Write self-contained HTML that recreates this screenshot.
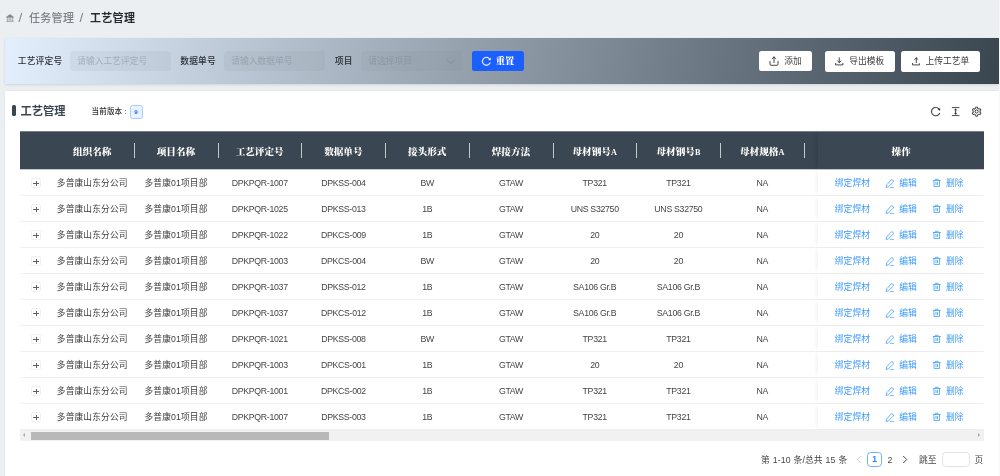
<!DOCTYPE html>
<html lang="zh-CN"><head><meta charset="utf-8"><title>工艺管理</title>
<style>
*{box-sizing:border-box;margin:0;padding:0}
html,body{width:1000px;height:476px;overflow:hidden}
body{background:#eceff2;font-family:"Liberation Sans","Noto Sans CJK SC",sans-serif;color:#333;position:relative;font-size:8.75px}
#root{position:absolute;left:0;top:0;width:1000px;height:476px;overflow:hidden;will-change:opacity;opacity:0.9999}
.abs{position:absolute}
i{font-style:normal}
.bc{position:absolute;left:5px;top:9px;height:18px;line-height:18px;font-size:11px;color:#7d8187;font-weight:500;white-space:nowrap;letter-spacing:0.3px}
.bc b{color:#26292e;font-weight:700}
.search{position:absolute;left:4.800px;top:38px;width:994px;height:46px;background:linear-gradient(100deg,#e3effd 0%,#39454f 100%);box-shadow:0 0.500px 2.500px rgba(60,70,90,.16)}
.lbl{position:absolute;top:0;height:46px;line-height:47.500px;font-size:8.750px;font-weight:500;color:#2b3036;white-space:nowrap;letter-spacing:0.15px}
.inp{position:absolute;top:13px;height:20px;border-radius:4px;background:rgba(125,135,150,.1);color:rgba(125,135,150,.5);font-size:8.750px;line-height:21px;padding-left:7.500px;white-space:nowrap}
.btn{position:absolute;border-radius:2.500px;background:#fff;color:#3a3a3a;font-size:8.750px;white-space:nowrap}
.btn span{position:absolute;top:0}
.btn svg{position:absolute;fill:none;stroke:#333;stroke-width:0.900;stroke-linecap:round;stroke-linejoin:round}
.btn.primary{background:#1b5fff;color:#fff;font-weight:900;font-family:"Liberation Serif","Noto Serif CJK SC",serif}
.card{position:absolute;left:4.800px;top:91px;width:994px;height:386px;background:#fff;box-shadow:0 0 3px rgba(60,70,90,.08)}
.title{position:absolute;left:20.500px;top:100.500px;font-size:11.250px;line-height:20px;font-weight:700;color:#3a4651;white-space:nowrap}
.tbar{position:absolute;left:12.400px;top:105px;width:3.200px;height:11px;border-radius:1.600px;background:#3a4651}
.ver{position:absolute;left:91.500px;top:105.500px;font-size:7.500px;line-height:12px;font-weight:500;color:#333;white-space:nowrap;letter-spacing:0.2px}
.badge{position:absolute;left:129.500px;top:105px;width:13.200px;height:13.600px;border:1px solid #a3d0ff;background:#e8f3ff;border-radius:2.500px;color:#1f62ff;font-size:6.200px;line-height:11.500px;text-align:center;font-weight:700}
.thead{position:absolute;left:20.3px;top:131px;width:963.7px;height:39px;background:linear-gradient(to bottom,#757e85 0,#757e85 1px,#3a4651 1px,#3a4651 38px,#c4c8cb 38px)}
.hc{color:#fff;font-family:"Liberation Serif","Noto Serif CJK SC",serif;font-weight:900;font-size:9.650px;line-height:41.400px;height:38px}
.hc small{font-size:8.200px}
.sep{position:absolute;top:12.300px;width:1px;height:14.600px;background:#c4c9ce}
.tr{position:absolute;left:20.3px;width:963.7px;height:26px;border-bottom:1px solid #f0f0f0}
.c{position:absolute;top:0;text-align:center;white-space:nowrap}
.tr .c{height:26px;line-height:27px;font-size:8.750px;color:#404040}
.tr .en{letter-spacing:-0.3px;color:#454545}
.tr .cn{letter-spacing:0.1px}
.exp{position:absolute;left:10.400px;top:8.400px;width:10px;height:10px;border:0.500px solid #f0f0f0;border-radius:2px;background:#fff}
.exp i{position:absolute;background:#606060}
.exp i:first-child{left:1.700px;top:4.100px;width:5.600px;height:0.800px}
.exp i:last-child{left:4.100px;top:1.700px;width:0.800px;height:5.600px}
.op{position:absolute;left:798.0px;top:0;width:165.70000000000005px;height:25px;background:#fff;box-shadow:-3px 0 4px -2px rgba(0,0,0,.07)}
.thead .op{background:linear-gradient(to bottom,#757e85 0,#757e85 1px,#3b4752 1px,#3b4752 38px,#c4c8cb 38px);height:39px;text-align:center;box-shadow:-3px 0 4px -2px rgba(0,0,0,.15)}
.lk{fill:none;stroke:#409eff;stroke-width:0.850;stroke-linecap:round;stroke-linejoin:round}
.op a{position:absolute;top:0;line-height:27px;color:#3d9bff;font-size:8.750px;white-space:nowrap}
.sb{position:absolute;left:20.3px;top:430px;width:963.7px;height:11px;background:#f1f1f1}
.sb b{position:absolute;left:10.700px;top:2.200px;width:298.500px;height:7.600px;background:#b8b8b8}
.sb i{position:absolute;top:2.900px;width:0;height:0;border:2.600px solid transparent}
.pg{position:absolute;top:450.500px;height:18px;line-height:18px;font-size:8.750px;color:#454545;white-space:nowrap}
</style></head><body><div id="root">
<div class="bc"><svg class="abs" style="left:-0.5px;top:4px;width:10px;height:10px;fill:#85898f" viewBox="0 0 1024 1024"><path d="M894 462c30.900 0 43.800-39.700 18.700-58L530.800 126.200a31.810 31.810 0 0 0-37.600 0L111.300 404c-25.100 18.200-12.200 58 18.800 58H192v374h-72c-4.400 0-8 3.600-8 8v52c0 4.400 3.600 8 8 8h784c4.400 0 8-3.600 8-8v-52c0-4.400-3.600-8-8-8h-72V462h62zM381 836H264V462h117v374zm189 0H453V462h117v374zm190 0H642V462h118v374z"/></svg><span class="abs" style="left:13.600px;font-size:13.500px;font-weight:400">/</span><span class="abs" style="left:24px">任务管理</span><span class="abs" style="left:74.400px;font-size:13.500px;font-weight:400">/</span><b class="abs" style="left:85px">工艺管理</b></div>
<div class="search">
<span class="lbl" style="left:13px">工艺评定号</span><span class="inp" style="left:65px;width:101px">请输入工艺评定号</span>
<span class="lbl" style="left:175.500px">数据单号</span><span class="inp" style="left:219px;width:101px">请输入数据单号</span>
<span class="lbl" style="left:330px">项目</span><span class="inp" style="left:356px;width:101px">请选择项目<svg style="position:absolute;right:6px;top:5.500px;width:9.500px;height:9.500px" viewBox="0 0 10 10"><path d="M1 3L5 7l4-4" fill="none" stroke="rgba(115,125,140,.6)" stroke-width="0.900"/></svg></span>
<span class="btn primary" style="left:467.200px;top:13px;width:52px;height:20px;line-height:20.600px;font-size:9.200px"><svg style="left:9.200px;top:4.800px;width:10.600px;height:10.600px;stroke:#fff;stroke-width:30;fill:#fff" viewBox="0 0 1024 1024"><path d="M909.100 209.300l-56.400 44.100C775.800 155.100 656.200 92 521.900 92 290 92 102.300 279.500 102 511.500 101.700 743.700 289.800 932 521.900 932c181.300 0 335.800-115 394.600-276.100 1.500-4.200-.7-8.900-4.900-10.300l-56.700-19.500a8 8 0 0 0-10.100 4.800c-1.800 5-3.800 10-5.900 14.900-17.300 41-42.100 77.800-73.700 109.400A344.770 344.770 0 0 1 655.900 829c-42.300 17.900-87.400 27-133.800 27-46.500 0-91.500-9.100-133.800-27A341.500 341.500 0 0 1 279 755.200a342.160 342.160 0 0 1-73.700-109.400c-17.900-42.400-27-87.400-27-133.900s9.100-91.500 27-133.900c17.300-41 42.100-77.800 73.700-109.400 31.600-31.600 68.400-56.400 109.300-73.800 42.300-17.900 87.400-27 133.800-27 46.500 0 91.500 9.100 133.800 27a341.500 341.500 0 0 1 109.300 73.800c9.900 9.900 19.200 20.400 27.800 31.400l-60.200 47a8 8 0 0 0 3 14.100l175.600 43c5 1.200 9.900-2.600 9.900-7.700l.8-180.900c-.1-6.600-7.800-10.300-13-6.200z"/></svg><span style="left:23.800px">重置</span></span>
<span class="btn" style="left:754.250px;top:12.750px;width:53.250px;height:20.200px;line-height:20.200px"><svg style="left:9.800px;top:5.200px;width:10px;height:10px" viewBox="0 0 10 10"><path d="M1 5.300v3a1 1 0 0 0 1 1h6a1 1 0 0 0 1-1v-3M5 6.600V0.900M3.200 2.700L5 0.900 6.800 2.700"/></svg><span style="left:25.300px">添加</span></span>
<span class="btn" style="left:820px;top:13.300px;width:70px;height:20.500px;line-height:20.500px"><svg style="left:10.500px;top:5.800px;width:8.500px;height:8.500px" viewBox="0 0 8.500 8.500"><path d="M4.250 0.800V5.600M2.600 4L4.250 5.600 5.900 4M0.600 6.400V7.900H7.900V6.400"/></svg><span style="left:24.500px">导出模板</span></span>
<span class="btn" style="left:896.250px;top:13.300px;width:78.750px;height:20.500px;line-height:20.500px"><svg style="left:10.500px;top:5.800px;width:8.500px;height:8.500px" viewBox="0 0 8.500 8.500"><path d="M4.250 5.600V0.800M2.600 2.400L4.250 0.800 5.900 2.400M0.600 6.400V7.900H7.900V6.400"/></svg><span style="left:24.500px">上传工艺单</span></span>
</div>
<div class="card"></div><div class="abs" style="left:998.800px;top:0;width:1.200px;height:476px;background:#f6f7f9"></div>
<i class="tbar"></i><div class="title">工艺管理</div>
<div class="ver">当前版本 :</div><div class="badge">9</div>
<svg class="abs" style="left:929.9px;top:105.9px;width:11.25px;height:11.25px;fill:#333;stroke:#333;stroke-width:14" viewBox="0 0 1024 1024"><path d="M909.100 209.300l-56.400 44.100C775.800 155.100 656.200 92 521.900 92 290 92 102.300 279.500 102 511.500 101.700 743.700 289.800 932 521.900 932c181.300 0 335.800-115 394.600-276.100 1.500-4.200-.7-8.900-4.900-10.300l-56.700-19.500a8 8 0 0 0-10.100 4.800c-1.800 5-3.800 10-5.900 14.900-17.300 41-42.100 77.800-73.700 109.400A344.770 344.770 0 0 1 655.900 829c-42.300 17.900-87.400 27-133.800 27-46.500 0-91.500-9.100-133.800-27A341.500 341.500 0 0 1 279 755.200a342.160 342.160 0 0 1-73.700-109.400c-17.900-42.400-27-87.400-27-133.900s9.100-91.500 27-133.900c17.300-41 42.100-77.800 73.700-109.400 31.600-31.600 68.400-56.400 109.300-73.800 42.300-17.900 87.400-27 133.800-27 46.500 0 91.500 9.100 133.800 27a341.500 341.500 0 0 1 109.300 73.800c9.900 9.900 19.200 20.400 27.800 31.400l-60.200 47a8 8 0 0 0 3 14.100l175.600 43c5 1.200 9.900-2.600 9.900-7.700l.8-180.900c-.1-6.600-7.800-10.300-13-6.200z"/></svg><svg class="abs" style="left:950.2px;top:105.9px;width:11.25px;height:11.25px;fill:#333;stroke:#333;stroke-width:14" viewBox="0 0 1024 1024"><path d="M840 836H184c-4.400 0-8 3.600-8 8v60c0 4.400 3.600 8 8 8h656c4.400 0 8-3.600 8-8v-60c0-4.400-3.600-8-8-8zm0-724H184c-4.400 0-8 3.600-8 8v60c0 4.400 3.600 8 8 8h656c4.400 0 8-3.600 8-8v-60c0-4.400-3.600-8-8-8zM610.800 378c6 0 9.400-7 5.700-11.700L515.700 238.700a7.140 7.140 0 0 0-11.300 0L403.600 366.300a7.230 7.230 0 0 0 5.700 11.700H476v268h-62.800c-6 0-9.400 7-5.700 11.700l100.800 127.500c2.900 3.700 8.500 3.700 11.300 0l100.800-127.500c3.700-4.700.4-11.700-5.700-11.700H548V378h62.800z"/></svg><svg class="abs" style="left:970.8px;top:105.9px;width:11.25px;height:11.25px;fill:#333;stroke:#333;stroke-width:10" viewBox="0 0 1024 1024"><path d="M924.800 625.700l-65.500-56c3.100-19 4.700-38.400 4.700-57.800s-1.600-38.800-4.700-57.800l65.500-56a32.030 32.030 0 0 0 9.300-35.200l-.9-2.600a442.240 442.240 0 0 0-79.700-137.900l-1.800-2.100a32.120 32.120 0 0 0-35.100-9.500l-81.300 28.900c-30-24.600-63.500-44-99.700-57.600l-15.700-85a32.050 32.050 0 0 0-25.800-25.700l-2.700-.5c-52.100-9.400-106.900-9.400-159 0l-2.700.5a32.050 32.050 0 0 0-25.800 25.700l-15.800 85.400a351.860 351.860 0 0 0-99 57.400l-81.900-29.100a32 32 0 0 0-35.100 9.500l-1.800 2.100a446.020 446.020 0 0 0-79.700 137.900l-.9 2.600c-4.500 12.500-.8 26.500 9.300 35.200l66.300 56.600c-3.100 18.800-4.600 38-4.600 57.100 0 19.200 1.500 38.400 4.600 57.100L99 625.500a32.030 32.030 0 0 0-9.300 35.200l.9 2.600c18.100 50.400 44.900 96.900 79.700 137.900l1.800 2.100a32.120 32.120 0 0 0 35.100 9.500l81.900-29.100c29.800 24.500 63.100 43.900 99 57.400l15.800 85.400a32.050 32.050 0 0 0 25.800 25.700l2.700.5a449.400 449.400 0 0 0 159 0l2.700-.5a32.050 32.050 0 0 0 25.800-25.700l15.700-85a350 350 0 0 0 99.700-57.600l81.300 28.900a32 32 0 0 0 35.100-9.500l1.800-2.100c34.800-41.100 61.600-87.500 79.700-137.900l.9-2.600c4.500-12.300.8-26.300-9.300-35zM788.300 465.900c2.500 15.100 3.800 30.600 3.800 46.100s-1.300 31-3.800 46.100l-6.600 40.100 74.700 63.900a370.030 370.030 0 0 1-42.600 73.600L721 702.800l-31.400 25.800c-23.900 19.600-50.500 35-79.300 45.800l-38.100 14.300-17.900 97a377.500 377.500 0 0 1-85 0l-17.900-97.200-37.800-14.500c-28.500-10.800-55-26.200-78.700-45.700l-31.400-25.900-93.400 33.200c-17-22.900-31.200-47.600-42.600-73.600l75.500-64.500-6.500-40c-2.400-14.900-3.700-30.300-3.700-45.500 0-15.300 1.200-30.600 3.700-45.500l6.500-40-75.500-64.500c11.300-26.100 25.600-50.700 42.600-73.600l93.400 33.200 31.400-25.900c23.700-19.500 50.200-34.900 78.700-45.700l37.900-14.300 17.900-97.200c28.100-3.200 56.800-3.200 85 0l17.900 97 38.100 14.300c28.700 10.800 55.400 26.200 79.300 45.800l31.400 25.800 92.800-32.900c17 22.900 31.200 47.600 42.600 73.600L781.800 426l6.500 39.900zM512 326c-97.200 0-176 78.800-176 176s78.800 176 176 176 176-78.800 176-176-78.800-176-176-176zm79.200 255.200A111.600 111.600 0 0 1 512 614c-29.900 0-58-11.700-79.200-32.800A111.600 111.600 0 0 1 400 502c0-29.900 11.700-58 32.800-79.200C454 401.600 482.100 390 512 390c29.900 0 58 11.600 79.200 32.800A111.600 111.600 0 0 1 624 502c0 29.900-11.700 58-32.800 79.200z"/></svg>
<div class="thead"><span class="c hc" style="left:30.0px;width:83.8px">组织名称</span><span class="c hc" style="left:113.8px;width:83.8px">项目名称</span><span class="c hc" style="left:197.5px;width:83.8px">工艺评定号</span><span class="c hc" style="left:281.2px;width:83.8px">数据单号</span><span class="c hc" style="left:365.0px;width:83.8px">接头形式</span><span class="c hc" style="left:448.8px;width:83.7px">焊接方法</span><span class="c hc" style="left:532.5px;width:83.8px">母材钢号<small>A</small></span><span class="c hc" style="left:616.2px;width:83.8px">母材钢号<small>B</small></span><span class="c hc" style="left:700.0px;width:83.8px">母材规格<small>A</small></span><i class="sep" style="left:113.7px"></i><i class="sep" style="left:197.4px"></i><i class="sep" style="left:281.1px"></i><i class="sep" style="left:364.9px"></i><i class="sep" style="left:448.6px"></i><i class="sep" style="left:532.4px"></i><i class="sep" style="left:616.1px"></i><i class="sep" style="left:699.9px"></i><i class="sep" style="left:783.6px"></i><span class="op"><span class="c hc" style="left:0;width:165.70000000000005px">操作</span></span></div>
<div class="tr" style="top:169.6px"><span class="exp"><i></i><i></i></span><span class="c cn" style="left:30.0px;width:83.8px">多普康山东分公司</span><span class="c cn" style="left:113.8px;width:83.8px">多普康01项目部</span><span class="c en" style="left:197.5px;width:83.8px">DPKPQR-1007</span><span class="c en" style="left:281.2px;width:83.8px">DPKSS-004</span><span class="c en" style="left:365.0px;width:83.8px">BW</span><span class="c en" style="left:448.8px;width:83.7px">GTAW</span><span class="c en" style="left:532.5px;width:83.8px">TP321</span><span class="c en" style="left:616.2px;width:83.8px">TP321</span><span class="c en" style="left:700.0px;width:83.8px">NA</span><span class="op"><a style="left:16.400px;letter-spacing:0.1px">绑定焊材</a><svg class="abs lk" style="left:66.700px;top:9px;width:9.500px;height:9.500px" viewBox="0 0 10 10"><path d="M6.300 1.200a1.300 1.300 0 0 1 1.850 0l.35.35a1.300 1.300 0 0 1 0 1.850L3.600 8.300 1.200 8.900l.6-2.400zM5.600 9.200H9.200"/></svg><a style="left:81px">编辑</a><svg class="abs lk" style="left:113.700px;top:8.700px;width:9.500px;height:9.500px" viewBox="0 0 10 10"><path d="M1.200 2.600H8.800M3.700 2.600V1.300H6.300V2.600M2.100 2.600V8.900H7.900V2.600M4.200 4.500V7M5.800 4.500V7"/></svg><a style="left:127.800px">删除</a></span></div>
<div class="tr" style="top:195.6px"><span class="exp"><i></i><i></i></span><span class="c cn" style="left:30.0px;width:83.8px">多普康山东分公司</span><span class="c cn" style="left:113.8px;width:83.8px">多普康01项目部</span><span class="c en" style="left:197.5px;width:83.8px">DPKPQR-1025</span><span class="c en" style="left:281.2px;width:83.8px">DPKSS-013</span><span class="c en" style="left:365.0px;width:83.8px">1B</span><span class="c en" style="left:448.8px;width:83.7px">GTAW</span><span class="c en" style="left:532.5px;width:83.8px">UNS S32750</span><span class="c en" style="left:616.2px;width:83.8px">UNS S32750</span><span class="c en" style="left:700.0px;width:83.8px">NA</span><span class="op"><a style="left:16.400px;letter-spacing:0.1px">绑定焊材</a><svg class="abs lk" style="left:66.700px;top:9px;width:9.500px;height:9.500px" viewBox="0 0 10 10"><path d="M6.300 1.200a1.300 1.300 0 0 1 1.850 0l.35.35a1.300 1.300 0 0 1 0 1.850L3.600 8.300 1.200 8.900l.6-2.400zM5.600 9.200H9.200"/></svg><a style="left:81px">编辑</a><svg class="abs lk" style="left:113.700px;top:8.700px;width:9.500px;height:9.500px" viewBox="0 0 10 10"><path d="M1.200 2.600H8.800M3.700 2.600V1.300H6.300V2.600M2.100 2.600V8.900H7.900V2.600M4.200 4.500V7M5.800 4.500V7"/></svg><a style="left:127.800px">删除</a></span></div>
<div class="tr" style="top:221.6px"><span class="exp"><i></i><i></i></span><span class="c cn" style="left:30.0px;width:83.8px">多普康山东分公司</span><span class="c cn" style="left:113.8px;width:83.8px">多普康01项目部</span><span class="c en" style="left:197.5px;width:83.8px">DPKPQR-1022</span><span class="c en" style="left:281.2px;width:83.8px">DPKCS-009</span><span class="c en" style="left:365.0px;width:83.8px">1B</span><span class="c en" style="left:448.8px;width:83.7px">GTAW</span><span class="c en" style="left:532.5px;width:83.8px">20</span><span class="c en" style="left:616.2px;width:83.8px">20</span><span class="c en" style="left:700.0px;width:83.8px">NA</span><span class="op"><a style="left:16.400px;letter-spacing:0.1px">绑定焊材</a><svg class="abs lk" style="left:66.700px;top:9px;width:9.500px;height:9.500px" viewBox="0 0 10 10"><path d="M6.300 1.200a1.300 1.300 0 0 1 1.850 0l.35.35a1.300 1.300 0 0 1 0 1.850L3.600 8.300 1.200 8.900l.6-2.400zM5.600 9.200H9.200"/></svg><a style="left:81px">编辑</a><svg class="abs lk" style="left:113.700px;top:8.700px;width:9.500px;height:9.500px" viewBox="0 0 10 10"><path d="M1.200 2.600H8.800M3.700 2.600V1.300H6.300V2.600M2.100 2.600V8.900H7.900V2.600M4.200 4.500V7M5.800 4.500V7"/></svg><a style="left:127.800px">删除</a></span></div>
<div class="tr" style="top:247.6px"><span class="exp"><i></i><i></i></span><span class="c cn" style="left:30.0px;width:83.8px">多普康山东分公司</span><span class="c cn" style="left:113.8px;width:83.8px">多普康01项目部</span><span class="c en" style="left:197.5px;width:83.8px">DPKPQR-1003</span><span class="c en" style="left:281.2px;width:83.8px">DPKCS-004</span><span class="c en" style="left:365.0px;width:83.8px">BW</span><span class="c en" style="left:448.8px;width:83.7px">GTAW</span><span class="c en" style="left:532.5px;width:83.8px">20</span><span class="c en" style="left:616.2px;width:83.8px">20</span><span class="c en" style="left:700.0px;width:83.8px">NA</span><span class="op"><a style="left:16.400px;letter-spacing:0.1px">绑定焊材</a><svg class="abs lk" style="left:66.700px;top:9px;width:9.500px;height:9.500px" viewBox="0 0 10 10"><path d="M6.300 1.200a1.300 1.300 0 0 1 1.850 0l.35.35a1.300 1.300 0 0 1 0 1.850L3.600 8.300 1.200 8.900l.6-2.400zM5.600 9.200H9.200"/></svg><a style="left:81px">编辑</a><svg class="abs lk" style="left:113.700px;top:8.700px;width:9.500px;height:9.500px" viewBox="0 0 10 10"><path d="M1.200 2.600H8.800M3.700 2.600V1.300H6.300V2.600M2.100 2.600V8.900H7.900V2.600M4.200 4.500V7M5.800 4.500V7"/></svg><a style="left:127.800px">删除</a></span></div>
<div class="tr" style="top:273.6px"><span class="exp"><i></i><i></i></span><span class="c cn" style="left:30.0px;width:83.8px">多普康山东分公司</span><span class="c cn" style="left:113.8px;width:83.8px">多普康01项目部</span><span class="c en" style="left:197.5px;width:83.8px">DPKPQR-1037</span><span class="c en" style="left:281.2px;width:83.8px">DPKSS-012</span><span class="c en" style="left:365.0px;width:83.8px">1B</span><span class="c en" style="left:448.8px;width:83.7px">GTAW</span><span class="c en" style="left:532.5px;width:83.8px">SA106 Gr.B</span><span class="c en" style="left:616.2px;width:83.8px">SA106 Gr.B</span><span class="c en" style="left:700.0px;width:83.8px">NA</span><span class="op"><a style="left:16.400px;letter-spacing:0.1px">绑定焊材</a><svg class="abs lk" style="left:66.700px;top:9px;width:9.500px;height:9.500px" viewBox="0 0 10 10"><path d="M6.300 1.200a1.300 1.300 0 0 1 1.850 0l.35.35a1.300 1.300 0 0 1 0 1.850L3.600 8.300 1.200 8.900l.6-2.400zM5.600 9.200H9.200"/></svg><a style="left:81px">编辑</a><svg class="abs lk" style="left:113.700px;top:8.700px;width:9.500px;height:9.500px" viewBox="0 0 10 10"><path d="M1.200 2.600H8.800M3.700 2.600V1.300H6.300V2.600M2.100 2.600V8.900H7.900V2.600M4.200 4.500V7M5.800 4.500V7"/></svg><a style="left:127.800px">删除</a></span></div>
<div class="tr" style="top:299.6px"><span class="exp"><i></i><i></i></span><span class="c cn" style="left:30.0px;width:83.8px">多普康山东分公司</span><span class="c cn" style="left:113.8px;width:83.8px">多普康01项目部</span><span class="c en" style="left:197.5px;width:83.8px">DPKPQR-1037</span><span class="c en" style="left:281.2px;width:83.8px">DPKCS-012</span><span class="c en" style="left:365.0px;width:83.8px">1B</span><span class="c en" style="left:448.8px;width:83.7px">GTAW</span><span class="c en" style="left:532.5px;width:83.8px">SA106 Gr.B</span><span class="c en" style="left:616.2px;width:83.8px">SA106 Gr.B</span><span class="c en" style="left:700.0px;width:83.8px">NA</span><span class="op"><a style="left:16.400px;letter-spacing:0.1px">绑定焊材</a><svg class="abs lk" style="left:66.700px;top:9px;width:9.500px;height:9.500px" viewBox="0 0 10 10"><path d="M6.300 1.200a1.300 1.300 0 0 1 1.850 0l.35.35a1.300 1.300 0 0 1 0 1.850L3.600 8.300 1.200 8.900l.6-2.400zM5.600 9.200H9.200"/></svg><a style="left:81px">编辑</a><svg class="abs lk" style="left:113.700px;top:8.700px;width:9.500px;height:9.500px" viewBox="0 0 10 10"><path d="M1.200 2.600H8.800M3.700 2.600V1.300H6.300V2.600M2.100 2.600V8.900H7.900V2.600M4.200 4.500V7M5.800 4.500V7"/></svg><a style="left:127.800px">删除</a></span></div>
<div class="tr" style="top:325.6px"><span class="exp"><i></i><i></i></span><span class="c cn" style="left:30.0px;width:83.8px">多普康山东分公司</span><span class="c cn" style="left:113.8px;width:83.8px">多普康01项目部</span><span class="c en" style="left:197.5px;width:83.8px">DPKPQR-1021</span><span class="c en" style="left:281.2px;width:83.8px">DPKSS-008</span><span class="c en" style="left:365.0px;width:83.8px">BW</span><span class="c en" style="left:448.8px;width:83.7px">GTAW</span><span class="c en" style="left:532.5px;width:83.8px">TP321</span><span class="c en" style="left:616.2px;width:83.8px">TP321</span><span class="c en" style="left:700.0px;width:83.8px">NA</span><span class="op"><a style="left:16.400px;letter-spacing:0.1px">绑定焊材</a><svg class="abs lk" style="left:66.700px;top:9px;width:9.500px;height:9.500px" viewBox="0 0 10 10"><path d="M6.300 1.200a1.300 1.300 0 0 1 1.850 0l.35.35a1.300 1.300 0 0 1 0 1.850L3.600 8.300 1.200 8.900l.6-2.400zM5.600 9.200H9.200"/></svg><a style="left:81px">编辑</a><svg class="abs lk" style="left:113.700px;top:8.700px;width:9.500px;height:9.500px" viewBox="0 0 10 10"><path d="M1.200 2.600H8.800M3.700 2.600V1.300H6.300V2.600M2.100 2.600V8.900H7.900V2.600M4.200 4.500V7M5.800 4.500V7"/></svg><a style="left:127.800px">删除</a></span></div>
<div class="tr" style="top:351.6px"><span class="exp"><i></i><i></i></span><span class="c cn" style="left:30.0px;width:83.8px">多普康山东分公司</span><span class="c cn" style="left:113.8px;width:83.8px">多普康01项目部</span><span class="c en" style="left:197.5px;width:83.8px">DPKPQR-1003</span><span class="c en" style="left:281.2px;width:83.8px">DPKCS-001</span><span class="c en" style="left:365.0px;width:83.8px">1B</span><span class="c en" style="left:448.8px;width:83.7px">GTAW</span><span class="c en" style="left:532.5px;width:83.8px">20</span><span class="c en" style="left:616.2px;width:83.8px">20</span><span class="c en" style="left:700.0px;width:83.8px">NA</span><span class="op"><a style="left:16.400px;letter-spacing:0.1px">绑定焊材</a><svg class="abs lk" style="left:66.700px;top:9px;width:9.500px;height:9.500px" viewBox="0 0 10 10"><path d="M6.300 1.200a1.300 1.300 0 0 1 1.850 0l.35.35a1.300 1.300 0 0 1 0 1.850L3.600 8.300 1.200 8.900l.6-2.400zM5.600 9.200H9.200"/></svg><a style="left:81px">编辑</a><svg class="abs lk" style="left:113.700px;top:8.700px;width:9.500px;height:9.500px" viewBox="0 0 10 10"><path d="M1.200 2.600H8.800M3.700 2.600V1.300H6.300V2.600M2.100 2.600V8.900H7.900V2.600M4.200 4.500V7M5.800 4.500V7"/></svg><a style="left:127.800px">删除</a></span></div>
<div class="tr" style="top:377.6px"><span class="exp"><i></i><i></i></span><span class="c cn" style="left:30.0px;width:83.8px">多普康山东分公司</span><span class="c cn" style="left:113.8px;width:83.8px">多普康01项目部</span><span class="c en" style="left:197.5px;width:83.8px">DPKPQR-1001</span><span class="c en" style="left:281.2px;width:83.8px">DPKCS-002</span><span class="c en" style="left:365.0px;width:83.8px">1B</span><span class="c en" style="left:448.8px;width:83.7px">GTAW</span><span class="c en" style="left:532.5px;width:83.8px">TP321</span><span class="c en" style="left:616.2px;width:83.8px">TP321</span><span class="c en" style="left:700.0px;width:83.8px">NA</span><span class="op"><a style="left:16.400px;letter-spacing:0.1px">绑定焊材</a><svg class="abs lk" style="left:66.700px;top:9px;width:9.500px;height:9.500px" viewBox="0 0 10 10"><path d="M6.300 1.200a1.300 1.300 0 0 1 1.850 0l.35.35a1.300 1.300 0 0 1 0 1.850L3.600 8.300 1.200 8.900l.6-2.400zM5.600 9.200H9.200"/></svg><a style="left:81px">编辑</a><svg class="abs lk" style="left:113.700px;top:8.700px;width:9.500px;height:9.500px" viewBox="0 0 10 10"><path d="M1.200 2.600H8.800M3.700 2.600V1.300H6.300V2.600M2.100 2.600V8.900H7.900V2.600M4.200 4.500V7M5.800 4.500V7"/></svg><a style="left:127.800px">删除</a></span></div>
<div class="tr" style="top:403.6px"><span class="exp"><i></i><i></i></span><span class="c cn" style="left:30.0px;width:83.8px">多普康山东分公司</span><span class="c cn" style="left:113.8px;width:83.8px">多普康01项目部</span><span class="c en" style="left:197.5px;width:83.8px">DPKPQR-1007</span><span class="c en" style="left:281.2px;width:83.8px">DPKSS-003</span><span class="c en" style="left:365.0px;width:83.8px">1B</span><span class="c en" style="left:448.8px;width:83.7px">GTAW</span><span class="c en" style="left:532.5px;width:83.8px">TP321</span><span class="c en" style="left:616.2px;width:83.8px">TP321</span><span class="c en" style="left:700.0px;width:83.8px">NA</span><span class="op"><a style="left:16.400px;letter-spacing:0.1px">绑定焊材</a><svg class="abs lk" style="left:66.700px;top:9px;width:9.500px;height:9.500px" viewBox="0 0 10 10"><path d="M6.300 1.200a1.300 1.300 0 0 1 1.850 0l.35.35a1.300 1.300 0 0 1 0 1.850L3.600 8.300 1.200 8.900l.6-2.400zM5.600 9.200H9.200"/></svg><a style="left:81px">编辑</a><svg class="abs lk" style="left:113.700px;top:8.700px;width:9.500px;height:9.500px" viewBox="0 0 10 10"><path d="M1.200 2.600H8.800M3.700 2.600V1.300H6.300V2.600M2.100 2.600V8.900H7.900V2.600M4.200 4.500V7M5.800 4.500V7"/></svg><a style="left:127.800px">删除</a></span></div>
<div class="sb"><b></b><i style="left:2.500px;border-right-color:#a8a8a8;border-left-width:0"></i><i style="right:3.500px;border-left-color:#a8a8a8;border-right-width:0"></i></div>
<div class="pg" style="left:761px;letter-spacing:0.12px;word-spacing:0.3px">第 1-10 条/总共 15 条</div>
<svg class="abs" style="left:856px;top:455px;width:6px;height:9px" viewBox="0 0 6 9"><path d="M4.800 1L1.300 4.500 4.800 8" fill="none" stroke="#c4c4c4" stroke-width="0.900"/></svg>
<div class="pg" style="left:867px;width:15px;height:15px;top:452px;line-height:13.500px;border:1px solid #6bb3ff;border-radius:3.750px;text-align:center;color:#3088f5;font-weight:700;background:#fff">1</div>
<div class="pg" style="left:887.500px">2</div>
<svg class="abs" style="left:902px;top:455px;width:6px;height:9px" viewBox="0 0 6 9"><path d="M1.200 1L4.700 4.500 1.200 8" fill="none" stroke="#333" stroke-width="0.900"/></svg>
<div class="pg" style="left:919px">跳至</div>
<div class="abs" style="left:942px;top:452px;width:28px;height:15px;border:1px solid #e2e2e2;border-radius:3.750px;background:#fff"></div>
<div class="pg" style="left:974.500px">页</div>
</div></body></html>
